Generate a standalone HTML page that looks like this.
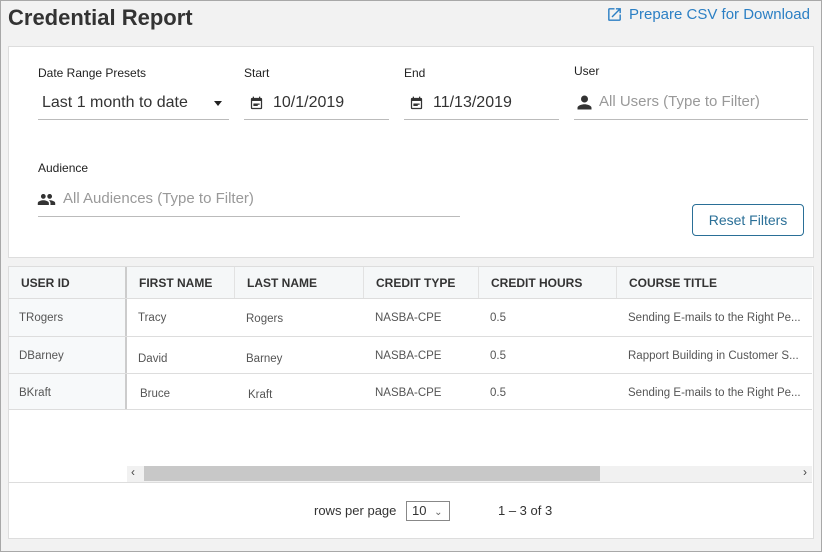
<!DOCTYPE html>
<html><head><style>
*{box-sizing:border-box;margin:0;padding:0}
body{width:822px;height:552px;background:#f2f2f2;font-family:"Liberation Sans",sans-serif;position:relative;overflow:hidden;color:#333}
.a{position:absolute}
.lbl{font-size:12px;color:#222}
.val{font-size:16px}
.ul{border-bottom:1px solid #bbb}
.card{background:#fff;border:1px solid #ddd}
.th{font-size:12px;font-weight:bold;color:#333;top:276px}
.td{font-size:11.5px;color:#555}
.hl{height:1px;background:#ddd;left:9px;width:803px}
</style></head><body>
<div class="a" style="left:0;top:0;width:822px;height:552px;border:1px solid #a8a8a8"></div>
<div class="a" style="left:8px;top:5px;font-size:22px;font-weight:bold;color:#333">Credential Report</div>
<svg class="a" style="left:606px;top:6px" width="17" height="17" viewBox="0 0 24 24"><path fill="#2b7fc4" d="M19 19H5V5h7V3H5a2 2 0 0 0-2 2v14a2 2 0 0 0 2 2h14c1.1 0 2-.9 2-2v-7h-2v7zM14 3v2h3.59l-9.83 9.83 1.41 1.41L19 6.41V10h2V3h-7z"/></svg>
<div class="a" style="left:629px;top:6px;font-size:15px;color:#2b7fc4">Prepare CSV for Download</div>

<div class="a card" style="left:8px;top:46px;width:806px;height:212px"></div>
<div class="a lbl" style="left:38px;top:66px">Date Range Presets</div>
<div class="a val ul" style="left:38px;top:94px;width:191px;height:26px;padding-left:4px">Last 1 month to date</div>
<div class="a" style="left:214px;top:101px;border:4px solid transparent;border-top:5px solid #222"></div>
<div class="a lbl" style="left:244px;top:66px">Start</div>
<div class="a val ul" style="left:244px;top:94px;width:145px;height:26px;padding-left:29px">10/1/2019</div>
<svg class="a" style="left:249px;top:96px" width="15" height="15" viewBox="0 0 24 24"><path fill="#333" d="M17 12H7v2h10zm2-9h-1V1h-2v2H8V1H6v2H5a2 2 0 0 0-2 2v14a2 2 0 0 0 2 2h14a2 2 0 0 0 2-2V5a2 2 0 0 0-2-2zm0 16H5V8h14zm-5-5H7v2h7z"/></svg>
<div class="a lbl" style="left:404px;top:66px">End</div>
<div class="a val ul" style="left:404px;top:94px;width:155px;height:26px;padding-left:29px">11/13/2019</div>
<svg class="a" style="left:409px;top:96px" width="15" height="15" viewBox="0 0 24 24"><path fill="#333" d="M17 12H7v2h10zm2-9h-1V1h-2v2H8V1H6v2H5a2 2 0 0 0-2 2v14a2 2 0 0 0 2 2h14a2 2 0 0 0 2-2V5a2 2 0 0 0-2-2zm0 16H5V8h14zm-5-5H7v2h7z"/></svg>
<div class="a lbl" style="left:574px;top:64px">User</div>
<div class="a val ul" style="left:574px;top:93px;width:234px;height:27px;padding-left:25px;color:#999;font-size:15px">All Users (Type to Filter)</div>
<svg class="a" style="left:574px;top:92px" width="21" height="21" viewBox="0 0 24 24"><path fill="#333" d="M12 12a4 4 0 1 0 0-8 4 4 0 0 0 0 8zm0 2c-2.67 0-8 1.34-8 4v2h16v-2c0-2.66-5.33-4-8-4z"/></svg>
<div class="a lbl" style="left:38px;top:161px">Audience</div>
<div class="a val ul" style="left:38px;top:190px;width:422px;height:27px;padding-left:25px;color:#999;font-size:15px">All Audiences (Type to Filter)</div>
<svg class="a" style="left:37px;top:190px" width="19" height="19" viewBox="0 0 24 24"><path fill="#333" d="M16 11c1.66 0 2.99-1.34 2.99-3S17.66 5 16 5s-3 1.34-3 3 1.34 3 3 3zm-8 0c1.66 0 2.99-1.34 2.99-3S9.66 5 8 5 5 6.34 5 8s1.34 3 3 3zm0 2c-2.33 0-7 1.17-7 3.5V19h14v-2.5C15 14.17 10.33 13 8 13zm8 0c-.29 0-.62.02-.97.05 1.16.84 1.97 1.97 1.97 3.45V19h6v-2.5c0-2.33-4.67-3.5-7-3.5z"/></svg>
<div class="a" style="left:692px;top:204px;width:112px;height:32px;border:1px solid #2a6f97;border-radius:4px;color:#2a6f97;font-size:14px;text-align:center;line-height:30px">Reset Filters</div>

<div class="a card" style="left:8px;top:266px;width:806px;height:273px"></div>
<div class="a" style="left:9px;top:267px;width:803px;height:32px;background:#f5f7f8"></div>
<div class="a" style="left:9px;top:299px;width:117px;height:111px;background:#f7f9fa"></div>
<div class="a" style="left:125px;top:267px;width:2px;height:143px;background:#ccc"></div>
<div class="a" style="left:234px;top:267px;width:1px;height:32px;background:#e2e2e2"></div>
<div class="a" style="left:363px;top:267px;width:1px;height:32px;background:#e2e2e2"></div>
<div class="a" style="left:478px;top:267px;width:1px;height:32px;background:#e2e2e2"></div>
<div class="a" style="left:616px;top:267px;width:1px;height:32px;background:#e2e2e2"></div>
<div class="a hl" style="top:298px"></div>
<div class="a hl" style="top:336px"></div>
<div class="a hl" style="top:373px"></div>
<div class="a hl" style="top:409px"></div>
<div class="a hl" style="top:482px"></div>
<div class="a th" style="left:21px">USER ID</div>
<div class="a th" style="left:139px">FIRST NAME</div>
<div class="a th" style="left:247px">LAST NAME</div>
<div class="a th" style="left:376px">CREDIT TYPE</div>
<div class="a th" style="left:491px">CREDIT HOURS</div>
<div class="a th" style="left:629px">COURSE TITLE</div>

<div class="a td" style="left:19px;top:312px">TRogers</div>
<div class="a td" style="left:138px;top:312px">Tracy</div>
<div class="a td" style="left:246px;top:313px">Rogers</div>
<div class="a td" style="left:375px;top:312px">NASBA-CPE</div>
<div class="a td" style="left:490px;top:312px">0.5</div>
<div class="a td" style="left:628px;top:312px">Sending E-mails to the Right Pe...</div>
<div class="a td" style="left:19px;top:350px">DBarney</div>
<div class="a td" style="left:138px;top:353px">David</div>
<div class="a td" style="left:246px;top:353px">Barney</div>
<div class="a td" style="left:375px;top:350px">NASBA-CPE</div>
<div class="a td" style="left:490px;top:350px">0.5</div>
<div class="a td" style="left:628px;top:350px">Rapport Building in Customer S...</div>
<div class="a td" style="left:19px;top:387px">BKraft</div>
<div class="a td" style="left:140px;top:388px">Bruce</div>
<div class="a td" style="left:248px;top:389px">Kraft</div>
<div class="a td" style="left:375px;top:387px">NASBA-CPE</div>
<div class="a td" style="left:490px;top:387px">0.5</div>
<div class="a td" style="left:628px;top:387px">Sending E-mails to the Right Pe...</div>

<div class="a" style="left:127px;top:466px;width:685px;height:16px;background:#f1f1f1"></div>
<div class="a" style="left:144px;top:466px;width:456px;height:15px;background:#c8c8c8"></div>
<div class="a" style="left:131px;top:465px;font-size:12px;color:#444">‹</div>
<div class="a" style="left:803px;top:465px;font-size:12px;color:#444">›</div>

<div class="a" style="left:314px;top:503px;font-size:13px;color:#333">rows per page</div>
<div class="a" style="left:406px;top:501px;width:44px;height:20px;border:1px solid #888;font-size:13px;padding-left:5px;line-height:18px">10 <span style="font-size:10px;color:#666;margin-left:4px">&#8964;</span></div>
<div class="a" style="left:498px;top:503px;font-size:13px;color:#333">1 – 3 of 3</div>
</body></html>
